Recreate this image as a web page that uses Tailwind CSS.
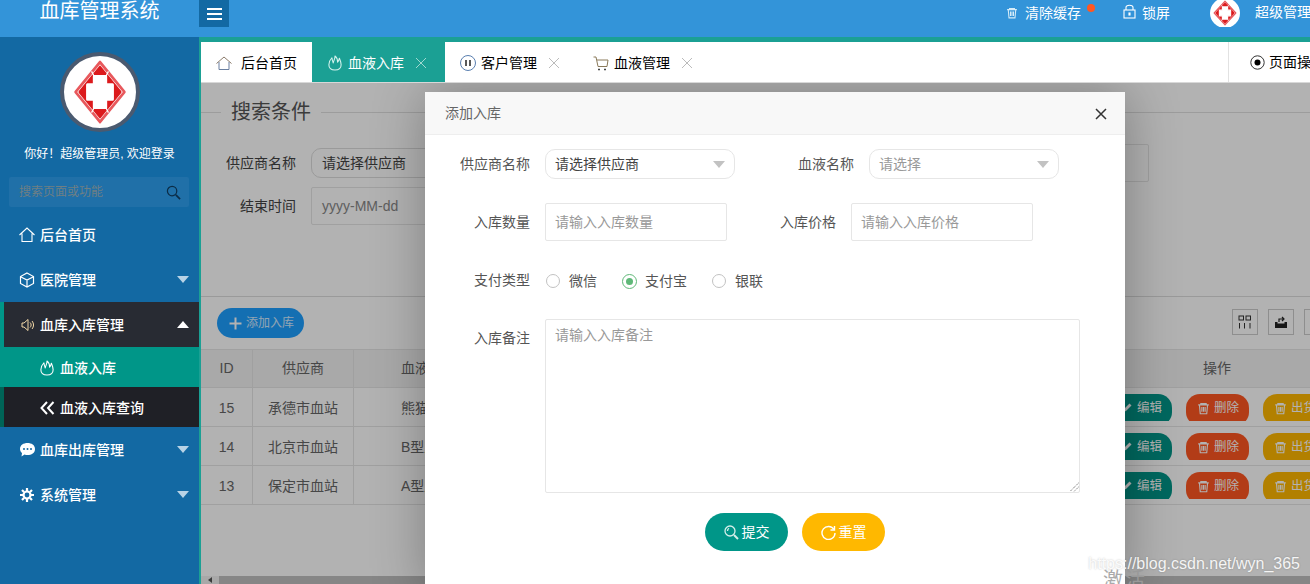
<!DOCTYPE html>
<html lang="zh-CN">

<head>
    <meta charset="UTF-8" />
    <meta name="viewport" content="width=device-width, initial-scale=1.0" />
    <title>血库管理系统</title>
    <script src="https://cdn.jsdelivr.net/npm/@tailwindcss/browser@4"></script>
</head>

<body class="h-[584px] w-[1310px] overflow-hidden flex flex-col bg-white text-[14px] leading-[20px] text-[#333] font-['Liberation_Sans','Noto_Sans_CJK_SC',sans-serif]">

    <svg class="hidden">
        <symbol id="logo" viewBox="0 0 64 64">
            <path d="M32 3 L61 32 L32 61 L3 32 Z" fill="#fff" stroke="#e8585c" stroke-width="3" stroke-linejoin="round" />
            <path d="M32 8 L56 32 L32 56 L8 32 Z" fill="#dc1a1c" stroke="#dc1a1c" stroke-width="3" stroke-linejoin="round" />
            <path d="M25 17 H39 V25 H47 V39 H39 V47 H25 V39 H17 V25 H25 Z" fill="#fff" stroke="#fff" stroke-width="3" stroke-linejoin="round" />
            <path d="M22 12 L27 20 M42 12 L37 20 M22 52 L27 44 M42 52 L37 44" stroke="#fff" stroke-width="1.500" />
        </symbol>
        <symbol id="trash" viewBox="0 0 16 16">
            <path d="M1.500 3.500 H14.500 M4 2 H12 M3 3.500 L4 14.500 H12 L13 3.500 M6 6 V12 M8 6 V12 M10 6 V12" fill="none" stroke="currentColor" stroke-width="1.400" />
        </symbol>
        <symbol id="flame" viewBox="0 0 16 18">
            <path d="M4.500 3 C2.500 5 1 8 1 11 C1 15 4 17 8 17 C12 17 15 15 15 11 C15 8 14 6 13 3.500 C12.600 5.500 12 7 11 8 C11 5 10 2.500 8 1 C8.200 4 6.500 6 6 9 C5.200 7 4.700 5 4.500 3 Z" fill="none" stroke="currentColor" stroke-width="1.200" stroke-linejoin="round" />
        </symbol>
        <symbol id="pencil" viewBox="0 0 10 10">
            <path d="M1 9 L2 6 L7.500 0.500 L9.500 2.500 L4 8 Z" fill="currentColor" />
        </symbol>
        <symbol id="caret" viewBox="0 0 12 7">
            <path d="M0 0 H12 L6 7 Z" fill="currentColor" />
        </symbol>
        <symbol id="close" viewBox="0 0 12 12">
            <path d="M1 1 L11 11 M11 1 L1 11" fill="none" stroke="currentColor" stroke-width="1" />
        </symbol>
    </svg>

    <!-- top bar -->
    <header class="h-[37px] shrink-0 flex items-start bg-[#3394d9] text-white">
        <div class="w-[199px] text-center text-[20px] leading-[24px] -mt-[1px]">血库管理系统</div>
        <button class="w-[30px] h-[27px] bg-[#1369a3] flex items-center justify-center">
            <svg width="15" height="12" viewBox="0 0 15 12"><path d="M0 1 H15 M0 6 H15 M0 11 H15" stroke="#fff" stroke-width="2" /></svg>
        </button>
        <div class="ml-auto flex items-start w-[305px] h-[27px] overflow-hidden whitespace-nowrap">
            <svg width="12" height="12" class="ml-[1px] mt-[7px] shrink-0 text-[#d6ecf8]"><use href="#trash" /></svg>
            <span class="ml-[7px] mt-[3px] shrink-0">清除缓存</span>
            <span class="ml-[6px] mt-[4px] w-[8px] h-[8px] shrink-0 rounded-full bg-[#ff5722]"></span>
            <svg width="13" height="15" viewBox="0 0 13 15" class="ml-[28px] mt-[4px] shrink-0" fill="none" stroke="#fff" stroke-width="1.100"><path d="M3 6 V3.500 C3 0.500 10 0.500 10 3.500 V6" /><rect x="1" y="6" width="11" height="8" /><rect x="6" y="9" width="1" height="2" fill="#fff" /></svg>
            <span class="ml-[6px] mt-[3px] shrink-0">锁屏</span>
            <div class="ml-[40px] -mt-[2px] w-[30px] h-[30px] rounded-full bg-white shrink-0 flex items-center justify-center">
                <svg width="24" height="26" viewBox="0 0 64 64" preserveAspectRatio="none"><use href="#logo" /></svg>
            </div>
            <span class="ml-[15px] mt-[2px] shrink-0">超级管理员</span>
        </div>
    </header>

    <div class="flex-1 flex min-h-0">
        <!-- sidebar -->
        <aside class="w-[201px] shrink-0 bg-[#1369a3] border-r-2 border-[#1ba094] text-white flex flex-col">
            <div class="mt-[15px] mx-auto w-[80px] h-[80px] rounded-full bg-white border-[4px] border-[#4a5a70] flex items-center justify-center">
                <svg width="54" height="66" viewBox="0 0 64 64" preserveAspectRatio="none"><use href="#logo" /></svg>
            </div>
            <p class="mt-[12px] text-center text-[12px] leading-[20px]">你好！超级管理员, 欢迎登录</p>
            <div class="mt-[13px] ml-[9px] mr-[10px] h-[30px] rounded-[2px] bg-[#2070a8] flex items-center pl-[10px] pr-[8px]">
                <span class="text-[12px] text-[#6f7f84]">搜索页面或功能</span>
                <svg width="15" height="15" viewBox="0 0 16 16" class="ml-auto" fill="none" stroke="#0b2c46" stroke-width="1.300"><circle cx="6.500" cy="6.500" r="5" /><path d="M10.500 10.500 L15 15" stroke-width="1.800" /></svg>
            </div>

            <nav class="mt-[5px]">
                <a class="h-[45px] flex items-center pl-[19px] pr-[10px] font-medium">
                    <svg width="16" height="16" viewBox="0 0 16 16" fill="none" stroke="#fff" stroke-width="1.100"><path d="M0.500 8 L8 1 L15.500 8 M3 6.500 V14.500 H13 V6.500" /></svg>
                    <span class="ml-[5px]">后台首页</span>
                </a>
                <a class="h-[45px] flex items-center pl-[19px] pr-[10px] font-medium">
                    <svg width="16" height="16" viewBox="0 0 16 16" fill="none" stroke="#fff" stroke-width="1.200"><path d="M8 1 L14.500 4.500 V11.500 L8 15 L1.500 11.500 V4.500 Z M2 5 L8 8 L14 5 M8 8 V15" /></svg>
                    <span class="ml-[5px]">医院管理</span>
                    <svg width="12" height="7" class="ml-auto text-[#b8d3e6]"><use href="#caret" /></svg>
                </a>
                <a class="h-[45px] flex items-center pl-[17px] pr-[10px] bg-[#282b33] border-l-4 border-[#009688] font-medium">
                    <svg width="14" height="14" viewBox="0 0 14 14" fill="none" stroke="#f3d9a8" stroke-width="1"><path d="M1 5 H3 L7 1.500 V12.500 L3 9 H1 Z M9 4.500 C10.500 6 10.500 8 9 9.500 M11 3 C13 5.500 13 8.500 11 11" /></svg>
                    <span class="ml-[5px]">血库入库管理</span>
                    <svg width="12" height="7" class="ml-auto rotate-180 text-white"><use href="#caret" /></svg>
                </a>
                <a class="h-[40px] pt-[2px] flex items-center pl-[40px] bg-[#009688] font-medium">
                    <svg width="14" height="16" class="text-white"><use href="#flame" /></svg>
                    <span class="ml-[6px]">血液入库</span>
                </a>
                <a class="h-[40px] pt-[2px] flex items-center pl-[36px] bg-[#1f2026] border-l-4 border-[#006457] font-medium">
                    <svg width="15" height="14" viewBox="0 0 15 14" fill="none" stroke="#fff" stroke-width="2"><path d="M7 1 L1.500 7 L7 13 M13.500 1 L8 7 L13.500 13" /></svg>
                    <span class="ml-[5px]">血液入库查询</span>
                </a>
                <a class="h-[45px] flex items-center pl-[20px] pr-[10px] font-medium">
                    <svg width="15" height="15" viewBox="0 0 15 15"><path d="M7.500 1 C11.500 1 15 3 15 7 C15 11 11.500 13 7.500 13 C6.500 13 5.500 12.900 4.500 12.500 L1.500 14.500 L2 11 C0.800 10 0 8.500 0 7 C0 3 3.500 1 7.500 1 Z" fill="#fff" /><circle cx="4" cy="7" r="1" fill="#1369a3" /><circle cx="7.500" cy="7" r="1" fill="#1369a3" /><circle cx="11" cy="7" r="1" fill="#1369a3" /></svg>
                    <span class="ml-[5px]">血库出库管理</span>
                    <svg width="12" height="7" class="ml-auto text-[#b8d3e6]"><use href="#caret" /></svg>
                </a>
                <a class="h-[45px] flex items-center pl-[20px] pr-[10px] font-medium">
                    <svg width="14" height="14" viewBox="0 0 14 14"><circle cx="7" cy="7" r="3.500" fill="none" stroke="#fff" stroke-width="2.200" /><path d="M7 0 V3 M7 11 V14 M0 7 H3 M11 7 H14 M2 2 L4 4 M10 10 L12 12 M12 2 L10 4 M4 10 L2 12" stroke="#fff" stroke-width="2.200" /></svg>
                    <span class="ml-[6px]">系统管理</span>
                    <svg width="12" height="7" class="ml-auto text-[#b8d3e6]"><use href="#caret" /></svg>
                </a>
            </nav>
        </aside>

        <!-- right side -->
        <main class="flex-1 min-w-0 flex flex-col bg-white">
            <div class="h-[46px] shrink-0 pt-[5px] bg-[#1ba094]">
                <div class="h-[41px] bg-white border-b border-[#d8d8d8] flex items-stretch overflow-hidden">
                    <a class="w-[111px] pt-[2px] flex items-center pl-[15px] text-black">
                        <svg width="16" height="15" viewBox="0 0 16 15" fill="none" stroke-width="1"><path d="M0.500 7.500 L8 1 L15.500 7.500" stroke="#8a7a6a" /><path d="M3 6 V13.500 H13 V6" stroke="#6a7fa0" /></svg>
                        <span class="ml-[9px]">后台首页</span>
                    </a>
                    <a class="w-[133px] h-[41px] pt-[1px] flex items-center pl-[16px] bg-[#1ba094] text-white">
                        <svg width="14" height="16" class="text-[#d6f3ee]"><use href="#flame" /></svg>
                        <span class="ml-[6px]">血液入库</span>
                        <svg width="12" height="12" class="ml-[11px] text-[#9fd8d0]"><use href="#close" /></svg>
                    </a>
                    <a class="w-[133px] pt-[2px] flex items-center pl-[15px] text-black">
                        <svg width="16" height="16" viewBox="0 0 16 16" fill="none" stroke="#5a7fb0"><circle cx="8" cy="8" r="7.500" /><path d="M6 5 V11 M10 5 V11" stroke="#222" stroke-width="1.500" /></svg>
                        <span class="ml-[5px]">客户管理</span>
                        <svg width="12" height="12" class="ml-[11px] text-[#bbb]"><use href="#close" /></svg>
                    </a>
                    <a class="pt-[2px] flex items-center pl-[15px] text-black">
                        <svg width="16" height="15" viewBox="0 0 16 15" fill="none" stroke="#8a7a5a"><path d="M0.500 1 H3 L5 10.500 H14 L15 4 H4" /><path d="M5 13.500 H7 M11 13.500 H13" stroke="#444" stroke-width="1.500" /></svg>
                        <span class="ml-[5px]">血液管理</span>
                        <svg width="12" height="12" class="ml-[11px] text-[#bbb]"><use href="#close" /></svg>
                    </a>
                    <div class="ml-auto w-[82px] shrink-0 border-l border-[#e2e2e2] pl-[21px] flex items-center whitespace-nowrap text-black">
                        <svg width="15" height="15" viewBox="0 0 15 15" class="shrink-0"><circle cx="7.500" cy="7.500" r="6.700" fill="none" stroke="#333" /><circle cx="7.500" cy="7.500" r="3" fill="#000" /></svg>
                        <span class="ml-[4px]">页面操作</span>
                    </div>
                </div>
            </div>

            <div class="relative flex-1 min-h-0 flex flex-col overflow-hidden">
                <div class="flex-1 min-h-0 overflow-hidden">
                    <!-- search form -->
                    <section class="h-[214px] border-b border-[#ddd]">
                        <div class="pt-[16px] flex items-center">
                            <span class="w-[20px] h-px bg-[#e0e0e0]"></span>
                            <span class="mx-[10px] text-[20px] leading-[26px] text-[#555]">搜索条件</span>
                            <span class="flex-1 h-px bg-[#e0e0e0]"></span>
                        </div>
                        <div class="mt-[19px] pl-[25px] pr-[161px] flex items-center h-[38px]">
                            <label class="w-[70px] text-[#444]">供应商名称</label>
                            <div class="ml-[15px] w-[190px] h-[30px] border border-[#ddd] rounded-[10px] pl-[10px] leading-[28px] text-[#444]">请选择供应商</div>
                            <div class="ml-auto w-[190px] h-[38px] border border-[#e6e6e6] rounded-[2px]"></div>
                        </div>
                        <div class="mt-[5px] pl-[39px] flex items-center h-[38px]">
                            <label class="w-[56px] text-[#444]">结束时间</label>
                            <div class="ml-[15px] w-[190px] h-[38px] border border-[#e6e6e6] rounded-[2px] pl-[10px] leading-[36px] text-[#888]">yyyy-MM-dd</div>
                        </div>
                    </section>

                    <!-- toolbar -->
                    <div class="h-[52px] pl-[16px] pr-[6px] flex items-center justify-between">
                        <button class="w-[87px] h-[30px] rounded-full bg-[#1e9fff] text-white text-[12px] flex items-center pl-[12px]">
                            <svg width="13" height="13" viewBox="0 0 13 13"><path d="M6.500 0.500 V12.500 M0.500 6.500 H12.500" stroke="#fff" stroke-width="2" /></svg>
                            <span class="ml-[4px] opacity-80">添加入库</span>
                        </button>
                        <div class="flex gap-[10px] -mr-[26px] -mt-[2px]">
                            <span class="w-[26px] h-[26px] border border-[#ccc] flex items-center justify-center">
                                <svg width="14" height="14" viewBox="0 0 14 14" fill="none" stroke="#333"><rect x="1" y="1" width="4.500" height="4" /><rect x="8" y="1" width="4.500" height="4" /><path d="M1.500 8 V13.500 M6.500 8 V13.500 M12 8 V13.500" /></svg>
                            </span>
                            <span class="w-[26px] h-[26px] border border-[#ccc] flex items-center justify-center">
                                <svg width="14" height="14" viewBox="0 0 14 14"><path d="M1 7 H3.500 V8.500 H10.500 V7 H13 V13 H1 Z" fill="#222" /><path d="M5 7 V4 H9 M8 2 L10 4 L8 6" fill="none" stroke="#222" stroke-width="1.200" /></svg>
                            </span>
                            <span class="w-[26px] h-[26px] border border-[#ccc]"></span>
                        </div>
                    </div>

                    <!-- table -->
                    <div class="w-[1133px] text-[#666] text-center">
                        <div class="h-[39px] flex bg-[#f2f2f2] border-y border-[#e6e6e6] leading-[37px]">
                            <div class="w-[52px] border-r border-[#e6e6e6]">ID</div>
                            <div class="w-[101px] border-r border-[#e6e6e6]">供应商</div>
                            <div class="flex-1 text-left pl-[47px]">血液名称</div>
                            <div class="w-[234px]">操作</div>
                        </div>
                        <div class="h-[39px] flex border-b border-[#e6e6e6] leading-[40px]">
                            <div class="w-[52px] border-r border-[#e6e6e6]">15</div>
                            <div class="w-[101px] border-r border-[#e6e6e6]">承德市血站</div>
                            <div class="flex-1 text-left pl-[47px]">熊猫血</div>
                            <div class="w-[234px] pl-[10px] pt-[6px] flex gap-[14px] text-white text-[12.500px]">
                                <div class="w-[62px] h-[27px] overflow-hidden"><span class="h-[32px] rounded-[14px] bg-[#009688] pl-[12px] flex items-center gap-[5px]"><svg width="10" height="10" class="-mt-[4px]"><use href="#pencil" /></svg><b class="font-normal leading-[20px] -mt-[4px]">编辑</b></span></div>
                                <div class="w-[63px] h-[27px] overflow-hidden"><span class="h-[32px] rounded-[14px] bg-[#ff5722] pl-[11px] flex items-center gap-[4px]"><svg width="13" height="13" class="-mt-[4px]"><use href="#trash" /></svg><b class="font-normal leading-[20px] -mt-[4px]">删除</b></span></div>
                                <div class="w-[63px] h-[27px] overflow-hidden"><span class="h-[32px] rounded-[14px] bg-[#ffb800] pl-[11px] flex items-center gap-[4px]"><svg width="13" height="13" class="-mt-[4px]"><use href="#trash" /></svg><b class="font-normal leading-[20px] -mt-[4px]">出货</b></span></div>
                            </div>
                        </div>
                        <div class="h-[39px] flex border-b border-[#e6e6e6] leading-[40px]">
                            <div class="w-[52px] border-r border-[#e6e6e6]">14</div>
                            <div class="w-[101px] border-r border-[#e6e6e6]">北京市血站</div>
                            <div class="flex-1 text-left pl-[47px]">B型血</div>
                            <div class="w-[234px] pl-[10px] pt-[6px] flex gap-[14px] text-white text-[12.500px]">
                                <div class="w-[62px] h-[27px] overflow-hidden"><span class="h-[32px] rounded-[14px] bg-[#009688] pl-[12px] flex items-center gap-[5px]"><svg width="10" height="10" class="-mt-[4px]"><use href="#pencil" /></svg><b class="font-normal leading-[20px] -mt-[4px]">编辑</b></span></div>
                                <div class="w-[63px] h-[27px] overflow-hidden"><span class="h-[32px] rounded-[14px] bg-[#ff5722] pl-[11px] flex items-center gap-[4px]"><svg width="13" height="13" class="-mt-[4px]"><use href="#trash" /></svg><b class="font-normal leading-[20px] -mt-[4px]">删除</b></span></div>
                                <div class="w-[63px] h-[27px] overflow-hidden"><span class="h-[32px] rounded-[14px] bg-[#ffb800] pl-[11px] flex items-center gap-[4px]"><svg width="13" height="13" class="-mt-[4px]"><use href="#trash" /></svg><b class="font-normal leading-[20px] -mt-[4px]">出货</b></span></div>
                            </div>
                        </div>
                        <div class="h-[39px] flex border-b border-[#e6e6e6] leading-[40px]">
                            <div class="w-[52px] border-r border-[#e6e6e6]">13</div>
                            <div class="w-[101px] border-r border-[#e6e6e6]">保定市血站</div>
                            <div class="flex-1 text-left pl-[47px]">A型血</div>
                            <div class="w-[234px] pl-[10px] pt-[6px] flex gap-[14px] text-white text-[12.500px]">
                                <div class="w-[62px] h-[27px] overflow-hidden"><span class="h-[32px] rounded-[14px] bg-[#009688] pl-[12px] flex items-center gap-[5px]"><svg width="10" height="10" class="-mt-[4px]"><use href="#pencil" /></svg><b class="font-normal leading-[20px] -mt-[4px]">编辑</b></span></div>
                                <div class="w-[63px] h-[27px] overflow-hidden"><span class="h-[32px] rounded-[14px] bg-[#ff5722] pl-[11px] flex items-center gap-[4px]"><svg width="13" height="13" class="-mt-[4px]"><use href="#trash" /></svg><b class="font-normal leading-[20px] -mt-[4px]">删除</b></span></div>
                                <div class="w-[63px] h-[27px] overflow-hidden"><span class="h-[32px] rounded-[14px] bg-[#ffb800] pl-[11px] flex items-center gap-[4px]"><svg width="13" height="13" class="-mt-[4px]"><use href="#trash" /></svg><b class="font-normal leading-[20px] -mt-[4px]">出货</b></span></div>
                            </div>
                        </div>
                    </div>
                </div>

                <!-- scrollbar -->
                <div class="h-[8px] shrink-0 bg-[#f1f1f1] flex">
                    <div class="w-[18px] flex items-center justify-center">
                        <svg width="4" height="6" viewBox="0 0 4 6"><path d="M4 0 V6 L0 3 Z" fill="#555" /></svg>
                    </div>
                    <div class="flex-1 bg-[#c1c1c1]"></div>
                </div>

                <!-- dimmed page under the dialog -->
                <div class="absolute inset-0 bg-black/30"></div>

                <!-- dialog -->
                <div class="absolute left-[224px] top-[9px] w-[700px] h-[500px] bg-white shadow-[1px_1px_50px_rgba(0,0,0,0.3)]">
                    <div class="relative h-[43px] bg-[#f8f8f8] border-b border-[#eee] pl-[20px] text-[14px] leading-[43px] text-[#666]">
                        添加入库
                        <svg width="12" height="12" viewBox="0 0 12 12" class="absolute right-[18px] top-[16px] text-[#333]"><path d="M1 1 L11 11 M11 1 L1 11" fill="none" stroke="currentColor" stroke-width="1.500" /></svg>
                    </div>

                    <div class="mt-[14px] h-[30px] flex items-center">
                        <label class="w-[105px] text-right text-[#555]">供应商名称</label>
                        <div class="ml-[15px] w-[190px] h-[30px] border border-[#e6e6e6] rounded-[10px] pl-[9px] pr-[9px] leading-[28px] text-[#444] flex items-center justify-between">
                            请选择供应商
                            <svg width="12" height="7" class="text-[#c2c2c2]"><use href="#caret" /></svg>
                        </div>
                        <label class="w-[119px] text-right text-[#555]">血液名称</label>
                        <div class="ml-[15px] w-[190px] h-[30px] border border-[#e6e6e6] rounded-[10px] pl-[9px] pr-[9px] leading-[28px] text-[#999] flex items-center justify-between">
                            请选择
                            <svg width="12" height="7" class="text-[#c2c2c2]"><use href="#caret" /></svg>
                        </div>
                    </div>

                    <div class="mt-[24px] h-[38px] flex items-center">
                        <label class="w-[105px] text-right text-[#555]">入库数量</label>
                        <div class="ml-[15px] w-[182px] h-[38px] border border-[#e6e6e6] rounded-[2px] pl-[9px] leading-[36px] text-[#999]">请输入入库数量</div>
                        <label class="w-[109px] text-right text-[#555]">入库价格</label>
                        <div class="ml-[15px] w-[182px] h-[38px] border border-[#e6e6e6] rounded-[2px] pl-[9px] leading-[36px] text-[#999]">请输入入库价格</div>
                    </div>

                    <div class="mt-[30px] h-[20px] flex items-center text-[#555]">
                        <label class="w-[105px] text-right -mt-[2px]">支付类型</label>
                        <span class="ml-[16px] w-[14px] h-[14px] rounded-full border border-[#c2c2c2]"></span>
                        <span class="ml-[9px]">微信</span>
                        <span class="ml-[25px] w-[15px] h-[15px] rounded-full border border-[#5fb878] flex items-center justify-center"><i class="w-[7px] h-[7px] rounded-full bg-[#5fb878]"></i></span>
                        <span class="ml-[8px]">支付宝</span>
                        <span class="ml-[25px] w-[14px] h-[14px] rounded-full border border-[#c2c2c2]"></span>
                        <span class="ml-[9px]">银联</span>
                    </div>

                    <div class="mt-[28px] flex items-start">
                        <label class="w-[105px] text-right mt-[9px] text-[#555]">入库备注</label>
                        <div class="relative ml-[15px] w-[535px] h-[174px] border border-[#e6e6e6] rounded-[2px] pl-[9px] pt-[5px] text-[#999]">
                            请输入入库备注
                            <svg width="10" height="10" viewBox="0 0 10 10" class="absolute right-0 bottom-0"><path d="M9.500 1 L1 9.500 M9.500 5 L5 9.500" stroke="#555" stroke-dasharray="1 1" /></svg>
                        </div>
                    </div>

                    <div class="mt-[20px] pl-[40px] flex justify-center gap-[14px]">
                        <button class="w-[83px] h-[38px] rounded-full bg-[#009688] text-white flex items-center justify-center">
                            <svg width="15" height="15" viewBox="0 0 15 15" fill="none" stroke="#d4eee9" stroke-width="1.300"><circle cx="6" cy="6" r="5" /><path d="M3.500 6 A3 3 0 0 1 5 3.200" /><path d="M10 10 L14 14" stroke-width="2" /></svg>
                            <span class="ml-[3px]">提交</span>
                        </button>
                        <button class="w-[83px] h-[38px] rounded-full bg-[#ffb800] text-white flex items-center justify-center">
                            <svg width="15" height="15" viewBox="0 0 15 15" fill="none" stroke="#fff" stroke-width="1.400"><path d="M13 4.500 A6.500 6.500 0 1 0 14 8" /><path d="M13.500 1 V5 H9.500" /></svg>
                            <span class="ml-[3px]">重置</span>
                        </button>
                    </div>
                </div>

                <!-- watermarks from the screenshot -->
                <span class="absolute right-[10px] bottom-[9px] text-[16px] leading-[22px] text-white/90 [text-shadow:0_0_2px_rgba(0,0,0,0.25)]">https://blog.csdn.net/wyn_365</span>
                <span class="absolute left-[902px] -bottom-[9px] text-[20px] leading-[26px] text-[#aaa] tracking-[2px]">激<span class="text-[#999]">活</span></span>
            </div>
        </main>
    </div>
</body>

</html>
